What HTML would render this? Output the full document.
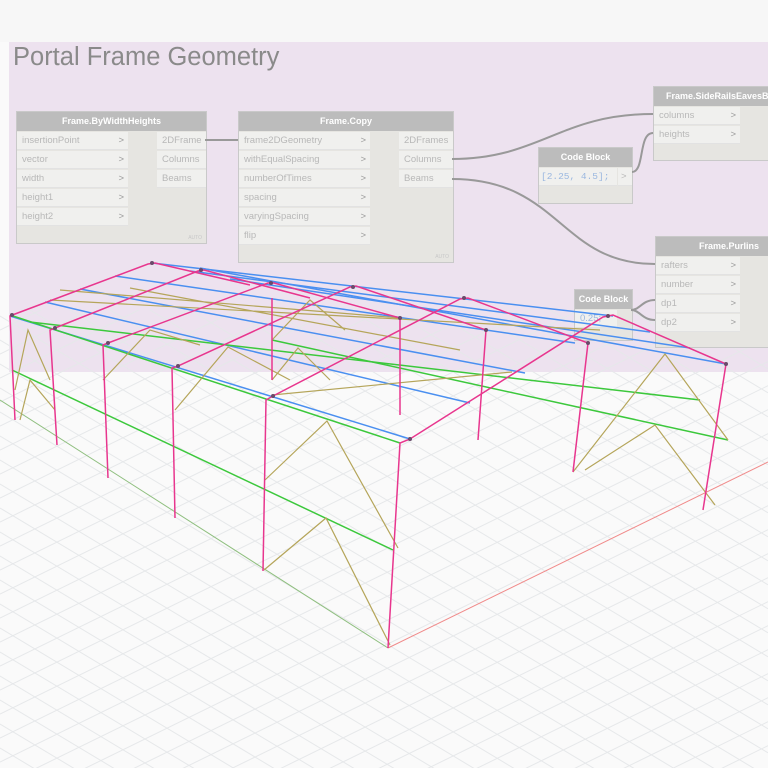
<!DOCTYPE html>
<html><head><meta charset="utf-8"><style>
html,body{margin:0;width:768px;height:768px;overflow:hidden}
body{background:#fafafa;font-family:"Liberation Sans",sans-serif;position:relative}
.top{position:absolute;left:0;top:0;width:768px;height:42px;background:#f7f7f7}
.grp{position:absolute;left:9px;top:42px;width:759px;height:330px;background:#ede2ef}
.title{position:absolute;left:13px;top:43px;font-size:25.5px;color:#8a8a8a}
.node{position:absolute;background:#e6e5e1;border:1px solid #c9c9c9;font-size:9.5px;color:#b8b8b8}
.hd{height:19px;background:#bcbcbc;color:#fff;font-weight:bold;text-align:center;line-height:19px;font-size:9px}
.row{position:absolute;height:18px;line-height:18px;background:#f0f0ee;padding-left:5px;box-sizing:border-box;border-bottom:1px solid #e2e2e2;white-space:nowrap;overflow:hidden}
.row b{position:absolute;right:4px;top:0;color:#999;font-weight:normal}
.auto{position:absolute;right:4px;bottom:2px;font-size:5px;color:#c8c8c8}
svg{position:absolute;left:0;top:0}
</style></head><body>
<div class="top"></div>
<div class="grp"></div>
<div class="title">Portal Frame Geometry</div>

<svg width="768" height="768" style="z-index:1" id="grid"></svg>

<div class="node" style="left:16px;top:111px;width:189px;height:131px;z-index:2">
<div class="hd">Frame.ByWidthHeights</div>
<div class="row" style="top:20px;left:0;width:111px">insertionPoint<b>&gt;</b></div>
<div class="row" style="top:39px;left:0;width:111px">vector<b>&gt;</b></div>
<div class="row" style="top:58px;left:0;width:111px">width<b>&gt;</b></div>
<div class="row" style="top:77px;left:0;width:111px">height1<b>&gt;</b></div>
<div class="row" style="top:96px;left:0;width:111px">height2<b>&gt;</b></div>
<div class="row" style="top:20px;left:140px;width:49px">2DFrame</div>
<div class="row" style="top:39px;left:140px;width:49px">Columns</div>
<div class="row" style="top:58px;left:140px;width:49px">Beams</div>
<div class="auto">AUTO</div></div>

<div class="node" style="left:238px;top:111px;width:214px;height:150px;z-index:2">
<div class="hd">Frame.Copy</div>
<div class="row" style="top:20px;left:0;width:131px">frame2DGeometry<b>&gt;</b></div>
<div class="row" style="top:39px;left:0;width:131px">withEqualSpacing<b>&gt;</b></div>
<div class="row" style="top:58px;left:0;width:131px">numberOfTimes<b>&gt;</b></div>
<div class="row" style="top:77px;left:0;width:131px">spacing<b>&gt;</b></div>
<div class="row" style="top:96px;left:0;width:131px">varyingSpacing<b>&gt;</b></div>
<div class="row" style="top:115px;left:0;width:131px">flip<b>&gt;</b></div>
<div class="row" style="top:20px;left:160px;width:54px">2DFrames</div>
<div class="row" style="top:39px;left:160px;width:54px">Columns</div>
<div class="row" style="top:58px;left:160px;width:54px">Beams</div>
<div class="auto">AUTO</div></div>

<div class="node" style="left:538px;top:147px;width:93px;height:55px;z-index:2">
<div class="hd">Code Block</div>
<div class="row" style="top:20px;left:0;width:78px;font-family:'Liberation Mono',monospace;color:#9bb8e0;font-size:9.5px;padding-left:2px">[2.25, 4.5];</div>
<div class="row" style="top:20px;left:79px;width:14px;padding-left:3px">&gt;</div></div>

<div class="node" style="left:653px;top:86px;width:120px;height:73px;z-index:2">
<div class="hd" style="text-align:left;padding-left:12px">Frame.SideRailsEavesB</div>
<div class="row" style="top:20px;left:0;width:86px">columns<b>&gt;</b></div>
<div class="row" style="top:39px;left:0;width:86px">heights<b>&gt;</b></div></div>

<div class="node" style="left:655px;top:236px;width:120px;height:110px;z-index:2">
<div class="hd" style="text-align:left;padding-left:43px">Frame.Purlins</div>
<div class="row" style="top:20px;left:0;width:84px">rafters<b>&gt;</b></div>
<div class="row" style="top:39px;left:0;width:84px">number<b>&gt;</b></div>
<div class="row" style="top:58px;left:0;width:84px">dp1<b>&gt;</b></div>
<div class="row" style="top:77px;left:0;width:84px">dp2<b>&gt;</b></div></div>

<div class="node" style="left:574px;top:289px;width:57px;height:50px;z-index:2">
<div class="hd">Code Block</div>
<div class="row" style="top:20px;left:0;width:42px;color:#9bb8e0">0.25;</div></div>

<svg width="768" height="768" style="z-index:3" fill="none">
<g stroke="#999" stroke-width="2">
<path d="M205 140 H238"/>
<path d="M452 159 C540 159 560 114 653 114"/>
<path d="M632 172 C645 172 638 133 653 133"/>
<path d="M452 179 C560 179 560 264 655 264"/>
<path d="M631 310 C640 310 642 300 655 300 M631 310 C640 310 642 320 655 320"/>
</g>
<path d="M0 400 L388 648" stroke="#8fbf7f" stroke-width="1"/>
<path d="M388 648 L768 462" stroke="#f08a8a" stroke-width="1"/>
<g stroke="#4a8ff0" stroke-width="1.5">
<path d="M10 316 L410 439"/><path d="M45 302 L470 403"/><path d="M80 289 L525 373"/><path d="M115 276 L575 343"/>
<path d="M152 263 L613 316"/><path d="M190 271 L650 332"/><path d="M230 279 L690 348"/><path d="M200 268 L726 364"/>
</g>
<g stroke="#3cc83c" stroke-width="1.5">
<path d="M10 315 L400 443"/><path d="M12 370 L393 550"/><path d="M272 340 L728 440"/><path d="M30 322 L700 400"/>
</g>
<g stroke="#b5a55a" stroke-width="1.2">
<path d="M264 570 L326 518 L390 645"/><path d="M265 480 L327 421 L398 548"/>
<path d="M573 472 L665 354 L728 440"/><path d="M585 470 L655 425 L715 505"/>
<path d="M175 410 L228 347 L290 380 M103 380 L150 330 L200 345"/>
<path d="M272 380 L298 348 L330 380 M272 340 L310 300 L345 330"/>
<path d="M15 390 L28 330 L50 380 M20 420 L30 380 L55 410"/>
<path d="M272 395 L512 372 M130 288 L460 350 M60 290 L400 318 M50 300 L600 330"/>
</g>
<g stroke="#e8368e" stroke-width="1.5">
<path d="M388 648 L400 443 L410 439 L603 317 L613 315 L726 364 L703 510"/>
<path d="M263 571 L266 400 L273 396 L460 299 L468 298 L588 343 L573 472"/>
<path d="M175 518 L172 368 L178 366 L350 287 L356 286 L486 330 L478 440"/>
<path d="M108 478 L103 345 L108 343 L268 283 L274 283 L400 318 L400 415"/>
<path d="M57 445 L50 330 L55 328 L198 271 L204 270 L310 298"/>
<path d="M15 420 L10 316 L15 314 L148 264 L155 263 L250 285"/>
<path d="M272 298 L272 380"/>
</g>
<g fill="#6a4a6a">
<circle cx="410" cy="439" r="2"/><circle cx="608" cy="316" r="2"/><circle cx="726" cy="364" r="2"/>
<circle cx="273" cy="396" r="2"/><circle cx="464" cy="298" r="2"/><circle cx="588" cy="343" r="2"/>
<circle cx="178" cy="366" r="2"/><circle cx="353" cy="287" r="2"/><circle cx="486" cy="330" r="2"/>
<circle cx="108" cy="343" r="2"/><circle cx="271" cy="283" r="2"/><circle cx="400" cy="318" r="2"/>
<circle cx="55" cy="328" r="2"/><circle cx="201" cy="270" r="2"/><circle cx="152" cy="263" r="2"/><circle cx="12" cy="315" r="2"/>
</g>
</svg>
<script>
var s='',g=document.getElementById('grid');
for(var c=330;c<1300;c+=24){s+='<line x1="0" y1="'+c+'" x2="768" y2="'+(c-0.49*768)+'"/>';}
for(var c=-500;c<800;c+=24){s+='<line x1="0" y1="'+c+'" x2="768" y2="'+(c+0.6*768)+'"/>';}
g.innerHTML='<defs><clipPath id="cp"><rect x="0" y="310" width="768" height="458"/></clipPath></defs><g clip-path="url(#cp)" stroke="#e6e8ea" stroke-width="1">'+s+'</g>';
</script>
</body></html>
